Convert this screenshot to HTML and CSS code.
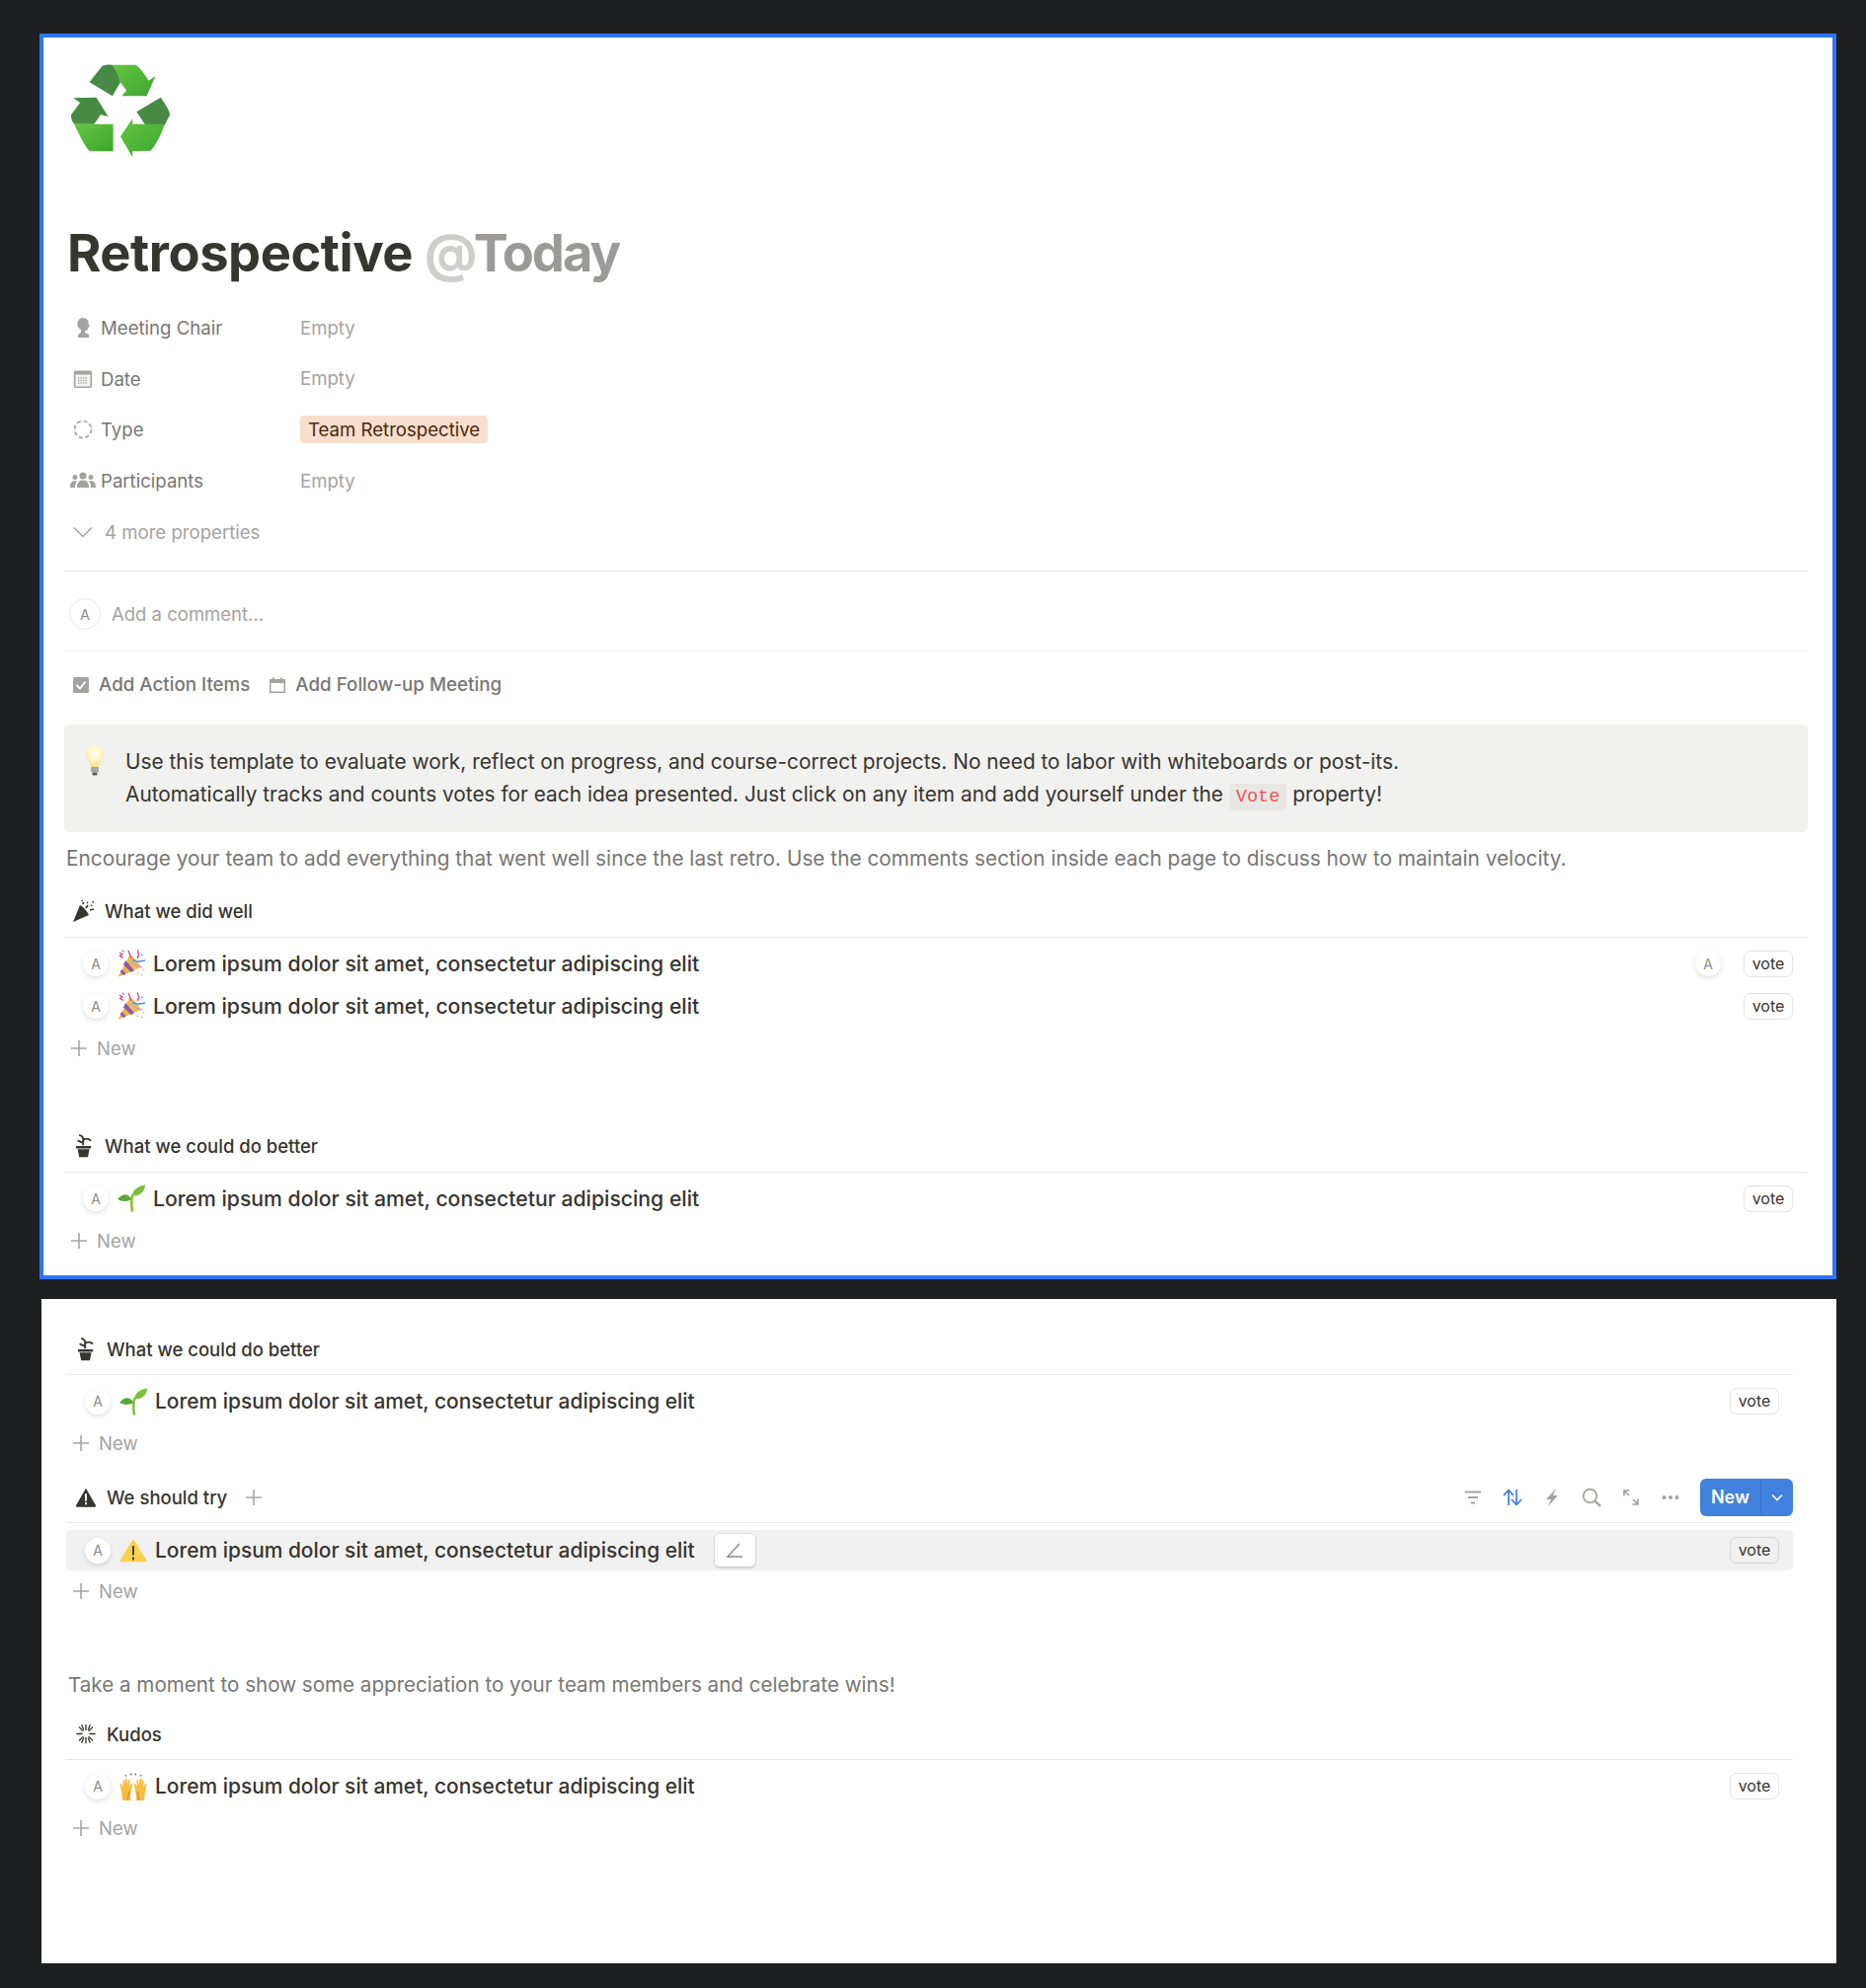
FILE: index.html
```html
<!DOCTYPE html>
<html lang="en">
<head>
    <meta charset="UTF-8">
    <title>Retrospective</title>
    <link rel="stylesheet" href="styles.css">
</head>
<body>
    <svg class="sprites" width="0" height="0">
        <defs>
            <linearGradient id="leaf" x1="0" y1="0" x2="1" y2="1">
                <stop offset="0" stop-color="#63c740"/>
                <stop offset="1" stop-color="#3ea52f"/>
            </linearGradient>
            <linearGradient id="cone" x1="0" y1="1" x2="1" y2="0">
                <stop offset="0" stop-color="#e6a92b"/>
                <stop offset="1" stop-color="#f5cf5a"/>
            </linearGradient>
            <radialGradient id="bulb" cx="0.500" cy="0.350" r="0.600">
                <stop offset="0" stop-color="#fffef2"/>
                <stop offset="0.600" stop-color="#fdf6c4"/>
                <stop offset="1" stop-color="#f7e08a"/>
            </radialGradient>
            <symbol id="party" viewBox="0 0 28 28">
                <path d="M12.500 5 C17 8 22 13 24 18 L1 27.500 Z" fill="url(#cone)"/>
                <path d="M8 11 C11 14 15 19 17 21.500 L13.500 23 C11 20 8 17 6 15.500 Z" fill="#8a56b8"/>
                <path d="M4 20 C5.500 21 7.500 23 8.500 25 L6 26 C5 24.500 4 23.500 2.800 23 Z" fill="#8a56b8"/>
                <path d="M15 10 C18 13 21 12 28 11" fill="none" stroke="#4f8fe6" stroke-width="1.500"/>
                <path d="M14 12 C17 16 20 17 25 18" fill="none" stroke="#c9a0e0" stroke-width="1.300"/>
                <path d="M11 1 L14 9 M21 0.500 C19 3 24 4 20 9 M2 3 L5 5 L2.500 6.500 L6 8.500" fill="none" stroke="#d6457d" stroke-width="1.300"/>
                <path d="M5 0.500 L6.500 3 M24 5 L26 6" stroke="#4f9be8" stroke-width="1.300"/>
                <path d="M26 20 L27 21 M20 24 L21 25 M24 25 L25 26" stroke="#e9a13a" stroke-width="1.400"/>
            </symbol>
            <symbol id="plus" viewBox="0 0 18 18">
                <path d="M9 1 V17 M1 9 H17" stroke="#a8a6a2" stroke-width="1.600" fill="none"/>
            </symbol>
            <symbol id="sprout" viewBox="0 0 28 28">
                <path d="M15 27.500 C14 21 14 15 15.500 10" fill="none" stroke="#86c13f" stroke-width="2.600"/>
                <path d="M14.500 15 C11 8.500 5 8.500 0 15 C5 17.500 10 17.500 14.500 15 Z" fill="#5aa835"/>
                <path d="M15 11.500 C15.500 5 21 1.500 28 0.500 C28 7 23 11.500 15 11.500 Z" fill="#78bf3c"/>
            </symbol>
            <symbol id="pot" viewBox="0 0 24 30">
                <path d="M2 15 H21 V18 H2 Z M4 19 H19 L17 29 H6 Z" fill="#37352f"/>
                <path d="M11 14 V6 C11 3 9 2 6 1 M11 8 C13 5 17 5 21 8 M11 11 L4 8" fill="none" stroke="#37352f" stroke-width="2.400"/>
            </symbol>
        </defs>
    </svg>

    <section class="panel panel-selected">
        <svg class="page-icon" viewBox="100 135 250 285" preserveAspectRatio="none">
            <path d="M148 190 L180 140 Q190 135 205 137 Q222 165 225 190 L205 232 Z" fill="#478a43"/>
            <path d="M205 137 H262 Q272 140 295 185 L312 172 L290 232 H228 L240 215 L225 190 Q220 160 205 137 Z" fill="url(#leaf)"/>
            <path d="M108 238 L165 236 L195 295 L176 288 L160 317 H110 Q100 300 103 288 L125 252 Z" fill="#478a43"/>
            <path d="M110 317 H207 V400 H150 Q140 395 110 317 Z" fill="url(#leaf)"/>
            <path d="M325 236 L265 280 L287 320 H335 L348 288 Q345 270 325 236 Z" fill="#478a43"/>
            <path d="M335 317 Q320 370 300 398 L255 400 V418 L225 355 L255 300 V317 Z" fill="url(#leaf)"/>
        </svg>
        <h1 class="page-title">Retrospective <span class="title-mention"><span class="at">@</span>Today</span></h1>

        <div class="props">
            <div class="prop">
                <div class="prop-label">
                    <svg class="prop-icon" viewBox="0 0 20 20"><path d="M10 0 C14 0 16 3 15.500 6 L17 9 L15 10 C15 13 13 13 12 13 L12 15 L16 17 V20 H5 V17 L8 15 L8 12 C5 10 4 8 4.500 5 C5 2 7 0 10 0 Z" fill="#a5a3a0"/></svg>
                    Meeting Chair
                </div>
                <div class="prop-value empty">Empty</div>
            </div>
            <div class="prop">
                <div class="prop-label">
                    <svg class="prop-icon" viewBox="0 0 20 20"><rect x="0.800" y="1.500" width="18.400" height="17.500" rx="2" fill="#a5a3a0"/><rect x="2.500" y="5.500" width="15" height="12" fill="#f4f4f3"/><path d="M5 9 H15 M5 11.500 H15 M5 14 H15" stroke="#a5a3a0" stroke-width="1.300" stroke-dasharray="1.300 1.200"/></svg>
                    Date
                </div>
                <div class="prop-value empty prop-value-up">Empty</div>
            </div>
            <div class="prop">
                <div class="prop-label">
                    <svg class="prop-icon" viewBox="0 0 20 20"><circle cx="10" cy="10" r="8.500" fill="none" stroke="#a5a3a0" stroke-width="1.700" stroke-dasharray="4.200 2.500"/></svg>
                    Type
                </div>
                <div class="prop-value"><span class="tag">Team Retrospective</span></div>
            </div>
            <div class="prop">
                <div class="prop-label">
                    <svg class="prop-icon prop-icon-wide" viewBox="0 0 26 20"><circle cx="13" cy="5" r="3.600" fill="#a5a3a0"/><circle cx="5" cy="6.500" r="2.500" fill="#a5a3a0"/><circle cx="21" cy="6.500" r="2.500" fill="#a5a3a0"/><path d="M7 17 C7 11 10 9.500 13 9.500 C16 9.500 19 11 19 17 Z M0 17 C0 12 2 10 5 10 C6 10 7 10.500 7 10.500 C5.500 12 5 14 5 17 Z M26 17 C26 12 24 10 21 10 C20 10 19 10.500 19 10.500 C20.500 12 21 14 21 17 Z" fill="#a5a3a0"/></svg>
                    Participants
                </div>
                <div class="prop-value empty">Empty</div>
            </div>
            <div class="prop prop-more">
                <svg class="chevron" viewBox="0 0 20 12"><path d="M1 1.500 L10 10.500 L19 1.500" fill="none" stroke="#a5a3a0" stroke-width="1.500"/></svg>
                4 more properties
            </div>
        </div>

        <div class="comment-row">
            <span class="avatar avatar-flat">A</span>
            <span class="comment-input">Add a comment...</span>
        </div>

        <div class="actions">
            <span class="action">
                <svg class="action-icon" viewBox="0 0 16 16"><rect width="16" height="16" rx="1.500" fill="#a5a3a0"/><path d="M3.500 8 L7 11.500 L12.500 4.500" fill="none" stroke="#fff" stroke-width="2"/></svg>
                Add Action Items
            </span>
            <span class="action">
                <svg class="action-icon" viewBox="0 0 16 16"><path d="M3 0.500 H5 V2 H11 V0.500 H13 V2 H16 V16 H0 V2 H3 Z" fill="#a5a3a0"/><rect x="1.500" y="6" width="13" height="8.500" fill="#fff"/></svg>
                Add Follow-up Meeting
            </span>
        </div>

        <div class="callout">
            <svg class="callout-icon" viewBox="0 0 18 30"><path d="M9 0 C14.500 0 18 3.500 18 8.500 C18 13 14 15 13 21 H5 C4 15 0 13 0 8.500 C0 3.500 3.500 0 9 0 Z" fill="url(#bulb)"/><rect x="5" y="21" width="8" height="5.500" rx="1" fill="#a8a7a4"/><rect x="6.500" y="26.500" width="5" height="3" rx="1.200" fill="#5f5e5c"/></svg>
            <div class="callout-text">
                <p>Use this template to evaluate work, reflect on progress, and course-correct projects. No need to labor with whiteboards or post-its.</p>
                <p>Automatically tracks and counts votes for each idea presented. Just click on any item and add yourself under the <code class="inline-code">Vote</code> property!</p>
            </div>
        </div>

        <p class="note">Encourage your team to add everything that went well since the last retro. Use the comments section inside each page to discuss how to maintain velocity.</p>

        <div class="view-head">
            <svg class="view-icon" viewBox="0 0 22 24"><path d="M0 23 L7 6 C11 8 14 12 16 16 Z" fill="#37352f"/><path d="M10 5 L10.500 3 M9 1 L9.500 2 M13 9 L15 6 M14 3 L15 4 M17 11 L21 10 M18 6 L19 7 M20 2 L20.500 3.500" stroke="#37352f" stroke-width="1.700" fill="none"/></svg>
            What we did well
        </div>
        <div class="row">
            <span class="avatar">A</span>
            <svg class="row-emoji"><use href="#party"/></svg>
            <span class="row-title">Lorem ipsum dolor sit amet, consectetur adipiscing elit</span>
            <span class="avatar avatar-voter">A</span>
            <span class="vote">vote</span>
        </div>
        <div class="row">
            <span class="avatar">A</span>
            <svg class="row-emoji"><use href="#party"/></svg>
            <span class="row-title">Lorem ipsum dolor sit amet, consectetur adipiscing elit</span>
            <span class="vote">vote</span>
        </div>
        <div class="new-row"><svg class="plus"><use href="#plus"/></svg>New</div>

        <div class="view-head view-spaced">
            <svg class="view-icon"><use href="#pot"/></svg>
            What we could do better
        </div>
        <div class="row">
            <span class="avatar">A</span>
            <svg class="row-emoji"><use href="#sprout"/></svg>
            <span class="row-title">Lorem ipsum dolor sit amet, consectetur adipiscing elit</span>
            <span class="vote">vote</span>
        </div>
        <div class="new-row"><svg class="plus"><use href="#plus"/></svg>New</div>
    </section>

    <section class="panel panel-plain">
        <div class="view-head">
            <svg class="view-icon"><use href="#pot"/></svg>
            What we could do better
        </div>
        <div class="row">
            <span class="avatar">A</span>
            <svg class="row-emoji"><use href="#sprout"/></svg>
            <span class="row-title">Lorem ipsum dolor sit amet, consectetur adipiscing elit</span>
            <span class="vote">vote</span>
        </div>
        <div class="new-row"><svg class="plus"><use href="#plus"/></svg>New</div>

        <div class="view-head view-toolbar">
            <svg class="view-icon" viewBox="0 0 24 22"><path d="M12 1 L23 20 Q23.500 21.500 22 21.500 H2 Q0.500 21.500 1 20 Z" fill="#37352f"/><path d="M12 7 V15 M12 16.500 V19" stroke="#fff" stroke-width="2.200"/></svg>
            We should try
            <svg class="plus plus-head"><use href="#plus"/></svg>
            <div class="tools">
                <svg class="tool" viewBox="0 0 20 20"><path d="M2 4.500 H18 M5 10 H15 M8 15.500 H12" stroke="#a5a3a0" stroke-width="1.800" fill="none"/></svg>
                <svg class="tool" viewBox="0 0 20 20"><path d="M6 18 V3 M1 8 L6 2.500 L11 8 M14 2 V17 M9 12 L14 17.500 L19 12" stroke="#3f80de" stroke-width="1.700" fill="none"/></svg>
                <svg class="tool" viewBox="0 0 20 20"><path d="M14 1 L4 12 H9 L6 19 L16 8 H11 Z" fill="#a5a3a0"/></svg>
                <svg class="tool" viewBox="0 0 20 20"><circle cx="8.500" cy="8.500" r="6.800" fill="none" stroke="#a5a3a0" stroke-width="1.800"/><path d="M13.500 13.500 L19 19" stroke="#a5a3a0" stroke-width="2.400"/></svg>
                <svg class="tool" viewBox="0 0 20 20"><path d="M3 3 L8 8 M3 8.500 V3 H8.500 M12 12 L17 17 M17 11.500 V17 H11.500" stroke="#a5a3a0" stroke-width="1.700" fill="none"/></svg>
                <svg class="tool" viewBox="0 0 20 20"><circle cx="3.500" cy="10" r="2" fill="#a5a3a0"/><circle cx="10" cy="10" r="2" fill="#a5a3a0"/><circle cx="16.500" cy="10" r="2" fill="#a5a3a0"/></svg>
            </div>
            <div class="new-btn">
                <span class="new-btn-label">New</span>
                <span class="new-btn-caret"><svg viewBox="0 0 12 8" width="12" height="8"><path d="M1 1.500 L6 6.500 L11 1.500" fill="none" stroke="#fff" stroke-width="1.600"/></svg></span>
            </div>
        </div>
        <div class="row row-hover">
            <span class="avatar">A</span>
            <svg class="row-emoji" viewBox="0 0 28 24"><path d="M14 1.500 L27 22.500 H1 Z" fill="#fbd04f" stroke="#fbd04f" stroke-linejoin="round" stroke-width="1.500"/><path d="M14 7 V16.500 M14 18.500 V21.500" stroke="#37352f" stroke-width="1.800"/></svg>
            <span class="row-title">Lorem ipsum dolor sit amet, consectetur adipiscing elit</span>
            <span class="edit-btn"><svg viewBox="0 0 18 16" width="18" height="16"><path d="M14 1 L2 14 H17" fill="none" stroke="#8b8a87" stroke-width="1.400"/></svg></span>
            <span class="vote">vote</span>
        </div>
        <div class="new-row"><svg class="plus"><use href="#plus"/></svg>New</div>

        <p class="note note-spaced">Take a moment to show some appreciation to your team members and celebrate wins!</p>

        <div class="view-head view-after-note">
            <svg class="view-icon view-icon-short" viewBox="0 0 24 24"><path d="M12 1 V8 M12 16 V23 M1 12 H8 M16 12 H23 M4 4 L9 9 M15 15 L20 20 M20 4 L15 9 M9 15 L4 20 M7 1.500 L9.500 7.500 M17 1.500 L14.500 7.500 M7 22.500 L9.500 16.500 M17 22.500 L14.500 16.500" stroke="#37352f" stroke-width="1.500" fill="none"/></svg>
            Kudos
        </div>
        <div class="row">
            <span class="avatar">A</span>
            <svg class="row-emoji" viewBox="0 0 28 28"><path d="M3 28 L2 19 L0.500 12 C0.300 11 1.800 10.500 2.300 11.700 L3.500 15 L3.500 8 C3.500 6.800 5 6.800 5.200 8 L5.700 13 L6 6.500 C6.100 5.300 7.700 5.300 7.800 6.500 L8 13 L9 7.500 C9.200 6.300 10.700 6.500 10.600 7.800 L10.300 14 L11.500 11.500 C12.200 10.500 13.300 11 13 12.200 L12 18 L11 24 L11.500 28 Z" fill="#f6bd44"/><path d="M25 28 L26 19 L27.500 12 C27.700 11 26.200 10.500 25.700 11.700 L24.500 15 L24.500 8 C24.500 6.800 23 6.800 22.800 8 L22.300 13 L22 6.500 C21.900 5.300 20.300 5.300 20.200 6.500 L20 13 L19 7.500 C18.800 6.300 17.300 6.500 17.400 7.800 L17.700 14 L16.500 11.500 C15.800 10.500 14.700 11 15 12.200 L16 18 L17 24 L16.500 28 Z" fill="#f6bd44"/><path d="M8 28 L10 19 M20 28 L18 19" stroke="#d9962b" stroke-width="1.500"/><path d="M6 2 L7 3.500 M11.500 0.500 L12 2.500 M16.500 0.500 L16 2.500 M22 2 L21 3.500" stroke="#6f6e6c" stroke-width="1.300"/></svg>
            <span class="row-title">Lorem ipsum dolor sit amet, consectetur adipiscing elit</span>
            <span class="vote">vote</span>
        </div>
        <div class="new-row"><svg class="plus"><use href="#plus"/></svg>New</div>
    </section>
</body>
</html>
```

FILE: styles.css
```css
* {
    box-sizing: border-box;
}

body {
    margin: 0;
    padding: 34px 30px 25px 40px;
    background: #1e1f21;
    font-family: Inter, 'Liberation Sans', sans-serif;
    color: #37352f;
}

.sprites {
    position: absolute;
}

.panel {
    background: white;
}

.panel-selected {
    height: 1262px;
    border: 4px solid #2f75f0;
    padding: 27px 25px 0 21px;
    --row-font: 21.200px;
    --row-end: 15px;
}

.panel-plain {
    height: 673px;
    margin: 20px 0 0 2px;
    padding: 31px 44px 0 25px;
    --row-font: 20.950px;
    --row-end: 14px;
}

.page-icon {
    display: block;
    width: 102px;
    height: 95px;
    margin-left: 6px;
}

.page-title {
    margin: 65px 0 0 3px;
    height: 62px;
    line-height: 62px;
    font-size: 52.500px;
    font-weight: 700;
    letter-spacing: -0.500px;
}

.title-mention {
    color: #9b9a97;
    letter-spacing: -2px;
}

.at {
    color: #cfcecb;
}

.props {
    margin-top: 19px;
    padding-bottom: 13px;
    border-bottom: 1px solid #ebebea;
}

.prop {
    display: flex;
    align-items: center;
    height: 51.800px;
    font-size: 18.600px;
}

.prop-label {
    display: flex;
    align-items: center;
    width: 239px;
    color: #787774;
}

.prop-icon {
    width: 20px;
    height: 20px;
    margin: 0 8px 0 9px;
    flex: none;
}

.prop-icon-wide {
    width: 26px;
    margin: 0 5px 0 6px;
}

.prop-value.empty {
    color: #a5a3a0;
}

.prop-value-up {
    margin-top: -2px;
}

.tag {
    display: inline-block;
    background: #f8decd;
    color: #49290e;
    border-radius: 4px;
    padding: 0 8px;
    height: 28px;
    line-height: 28px;
}

.prop-more {
    color: #a5a3a0;
}

.chevron {
    width: 20px;
    height: 12px;
    margin: 0 12px 0 9px;
}

.comment-row {
    display: flex;
    align-items: center;
    height: 81px;
    padding: 7px 0 0 5px;
    border-bottom: 1px solid #f1f1f0;
    font-size: 18.500px;
}

.comment-input {
    margin-left: 11px;
    color: #a5a3a0;
}

.actions {
    display: flex;
    gap: 20px;
    height: 40px;
    margin-top: 14px;
    padding-left: 9px;
    font-size: 18.750px;
    font-weight: 500;
    color: #787774;
}

.action {
    display: flex;
    align-items: center;
    gap: 10px;
}

.action-icon {
    width: 16px;
    height: 16px;
}

.callout {
    display: flex;
    height: 109px;
    margin-top: 20px;
    padding: 21px 0 0 21px;
    background: #f1f1ef;
    border-radius: 5px;
}

.callout-icon {
    width: 18px;
    height: 30px;
    margin: 1px 1px 0 1px;
    flex: none;
}

.callout-text {
    margin-left: 21px;
    font-size: 20.850px;
    line-height: 33px;
}

.callout-text p {
    margin: 0;
}

.inline-code {
    font-family: 'Liberation Mono', monospace;
    font-size: 18.500px;
    color: #eb5757;
    background: #e8e7e4;
    border-radius: 4px;
    padding: 3px 7px;
}

.note {
    margin: 10px 0 0 2px;
    height: 34px;
    line-height: 34px;
    font-size: 20.800px;
    color: #787774;
}

.panel-plain .note {
    font-size: 20.600px;
}

.note-spaced {
    margin-top: 57px;
}

.view-head {
    display: flex;
    align-items: center;
    height: 46px;
    margin-top: 17px;
    padding: 0 0 6px 9px;
    border-bottom: 1px solid #e9e9e7;
    font-size: 18.500px;
    font-weight: 500;
}

.panel-plain > .view-head:first-child {
    margin-top: 0;
}

.view-spaced {
    margin-top: 59px;
}

.view-toolbar {
    margin-top: 14px;
}

.view-after-note {
    margin-top: 13px;
}

.view-icon {
    width: 22px;
    height: 24px;
    margin-right: 10px;
    flex: none;
}

.view-icon-short {
    height: 21px;
}

.row {
    display: flex;
    align-items: center;
    height: 43px;
    padding: 0 var(--row-end) 0 19px;
    font-size: var(--row-font);
    font-weight: 500;
}

.view-head + .row {
    margin-top: 5px;
}

.view-head + .row-hover {
    height: 41px;
    margin-top: 7px;
    background: #f1f1f1;
    border-radius: 5px;
}

.avatar {
    display: flex;
    align-items: center;
    justify-content: center;
    width: 26px;
    height: 26px;
    border-radius: 50%;
    background: white;
    box-shadow: 0 2px 5px rgba(0, 0, 0, 0.12);
    color: #8b8a87;
    font-size: 14px;
    font-weight: 400;
    flex: none;
}

.avatar-flat {
    width: 32px;
    height: 32px;
    box-shadow: none;
    border: 1px solid #ebebea;
}

.avatar-voter {
    margin: 0 0 0 auto;
}

.row-emoji {
    width: 28px;
    height: 28px;
    margin: 0 8px 0 9px;
    flex: none;
}

.vote {
    margin-left: auto;
    width: 50px;
    height: 27px;
    line-height: 25px;
    text-align: center;
    border: 1px solid #e4e4e2;
    border-radius: 7px;
    background: white;
    font-size: 16px;
    font-weight: 400;
}

.avatar-voter + .vote {
    margin-left: 23px;
}

.row-hover .vote {
    border-color: #d6d6d4;
    background: transparent;
}

.edit-btn {
    display: flex;
    align-items: center;
    justify-content: center;
    width: 41px;
    height: 33px;
    margin-left: 20px;
    background: white;
    border-radius: 5px;
    box-shadow: 0 0 0 1px rgba(0, 0, 0, 0.08), 0 2px 3px rgba(0, 0, 0, 0.1);
}

.new-row {
    display: flex;
    align-items: center;
    height: 42px;
    padding-left: 6px;
    font-size: 18.500px;
    color: #a5a3a0;
}

.plus {
    width: 18px;
    height: 18px;
    margin-right: 9px;
    flex: none;
}

.plus-head {
    margin: 0 0 0 18px;
}

.tools {
    display: flex;
    gap: 20px;
    margin-left: auto;
    margin-right: 20px;
}

.tool {
    width: 20px;
    height: 20px;
}

.new-btn {
    display: flex;
    width: 94px;
    height: 38px;
    border-radius: 6px;
    background: #4280dd;
    color: white;
    font-size: 18px;
    font-weight: 600;
    line-height: 38px;
}

.new-btn-label {
    width: 62px;
    text-align: center;
    border-right: 1px solid #3a72c6;
}

.new-btn-caret {
    flex: 1;
    display: flex;
    align-items: center;
    justify-content: center;
}
```
